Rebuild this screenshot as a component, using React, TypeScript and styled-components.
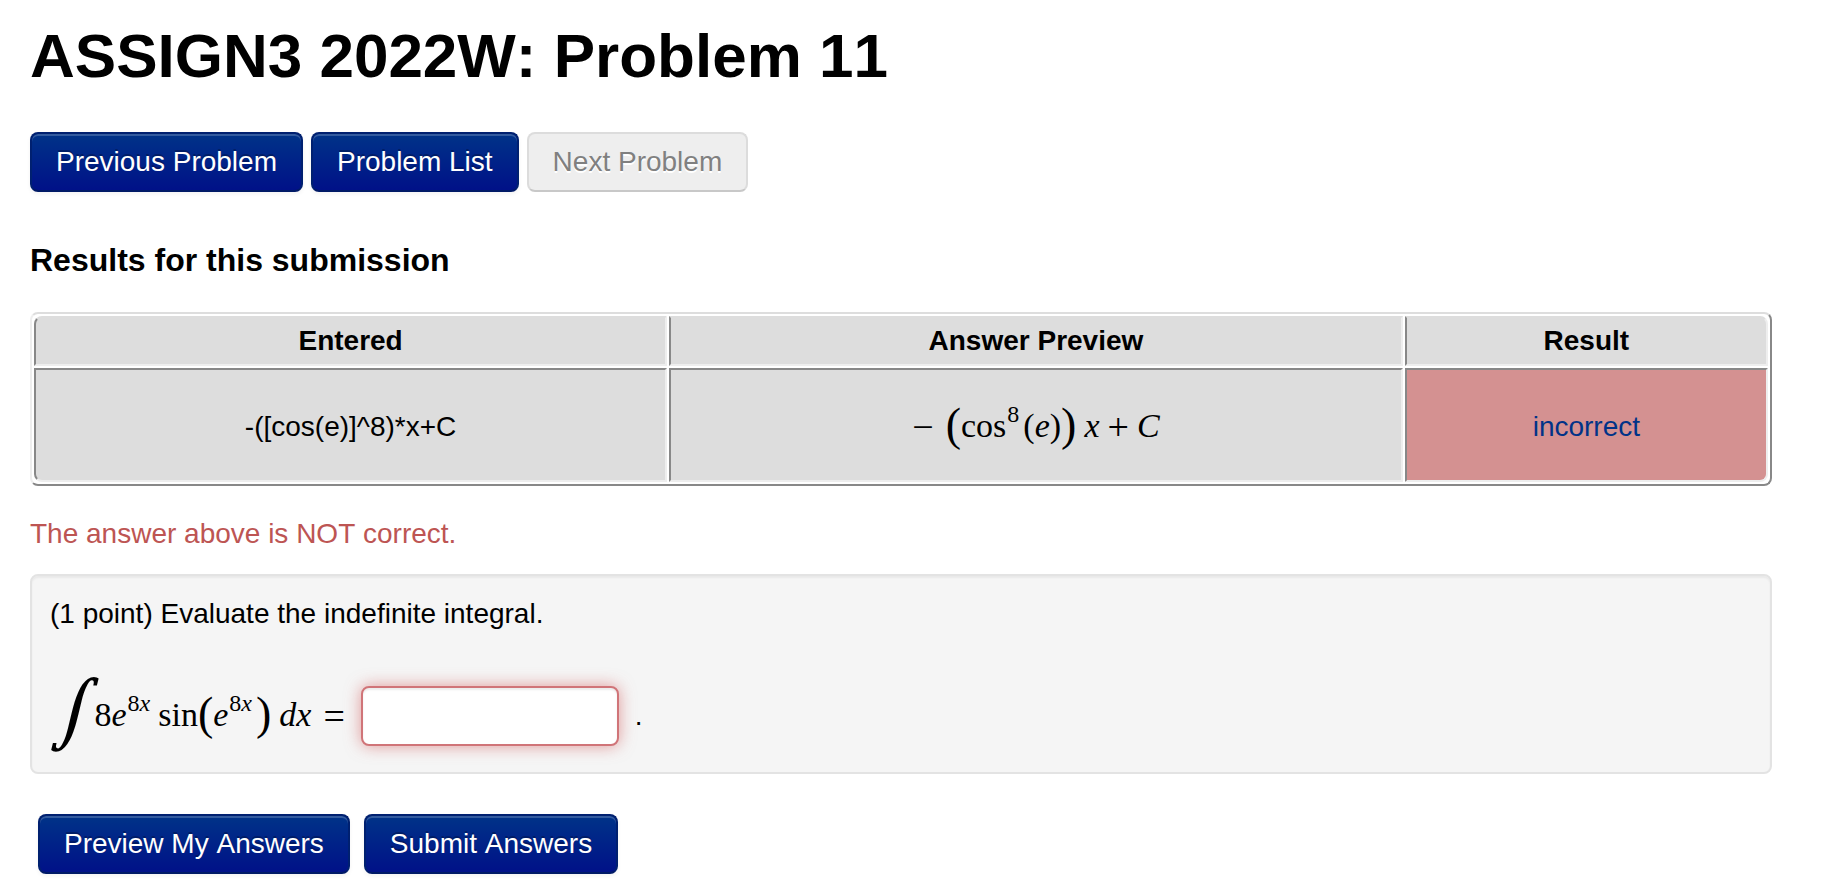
import React from "react";
import styled, { createGlobalStyle, css } from "styled-components";

const GlobalStyle = createGlobalStyle`
  *, *::before, *::after { box-sizing: border-box; }
  body {
    margin: 0;
    background: #fff;
    color: #000;
    font-family: "Liberation Sans", Arial, Helvetica, sans-serif;
    font-size: 28px;
    font-kerning: none;
    line-height: 40px;
  }
`;

const Page = styled.main`
  padding: 16px 60px 14px 30px;
`;

const Title = styled.h1`
  margin: 0 0 36px;
  font-size: 62px;
  line-height: 80px;
  font-weight: 700;
`;

const ButtonRow = styled.div<{ $gap: number; $indent?: number }>`
  display: flex;
  flex-wrap: wrap;
  gap: ${(p) => p.$gap}px;
  padding-left: ${(p) => p.$indent ?? 0}px;
`;

const Button = styled.button`
  padding: 8px 24px;
  border: 2px solid #002070;
  border-bottom-color: #001a66;
  border-radius: 8px;
  background: linear-gradient(to bottom, #003388, #001188);
  box-shadow: inset 0 2px 0 rgba(255, 255, 255, 0.2), 0 2px 4px rgba(0, 0, 0, 0.05);
  color: #fff;
  font: inherit;
  text-shadow: 0 -2px 0 rgba(0, 0, 0, 0.25);
  cursor: pointer;

  &:disabled {
    border-color: #dcdcdc;
    border-bottom-color: #c8c8c8;
    background: #eee;
    box-shadow: none;
    color: #808080;
    text-shadow: 0 2px 0 #fff;
    cursor: default;
  }
`;

const SectionTitle = styled.h2`
  margin: 48px 0 32px;
  font-size: 32px;
  line-height: 40px;
  font-weight: 700;
`;

const ResultsTable = styled.table`
  width: 100%;
  table-layout: fixed;
  border: 2px solid;
  border-color: #ddd #888 #888 #eee;
  border-radius: 8px;
  border-collapse: separate;
  border-spacing: 2px;
  text-align: center;
`;

const Column = styled.col<{ $share: number }>`
  width: ${(p) => p.$share}%;
`;

const cell = css`
  border: 2px solid;
  border-color: #888 #eee #eee #888;
  background: #ddd;
`;

const HeadCell = styled.th`
  ${cell}
  padding: 3px 8px;
  border-top-color: #ddd;
  font-weight: 700;

  &:first-child { border-top-left-radius: 8px; }
  &:last-child { border-top-right-radius: 8px; }
`;

const DataCell = styled.td<{ $wrong?: boolean }>`
  ${cell}
  height: 114px;
  padding: 6px 8px 3px;
  ${(p) => p.$wrong && css`background: #d49191;`}

  &:first-child { border-bottom-left-radius: 8px; }
  &:last-child { border-bottom-right-radius: 8px; }
`;

const ResultLink = styled.a`
  color: #003388;
  text-decoration: none;
`;

const Alert = styled.p`
  margin: 28px 0 20px;
  color: #bd5553;
`;

const ProblemBox = styled.section`
  margin-bottom: 40px;
  padding: 18px 18px 26px;
  border: 2px solid #e3e3e3;
  border-radius: 8px;
  background: #f5f5f5;
  box-shadow: inset 0 2px 2px rgba(0, 0, 0, 0.05);
`;

const Prompt = styled.p`
  margin: 0;
`;

const AnswerLine = styled.div`
  display: flex;
  align-items: center;
  margin-top: 52px;
`;

const AnswerInput = styled.input`
  width: 258px;
  height: 60px;
  margin: 0 16px;
  padding: 8px 12px;
  border: 2px solid #d07478;
  border-radius: 8px;
  background: #fff;
  box-shadow: inset 0 2px 2px rgba(0, 0, 0, 0.08), 0 0 16px rgba(210, 90, 90, 0.6);
  font: inherit;
  outline: none;
`;

const Formula = styled.span`
  display: inline-block;
  font-family: "Liberation Serif", "Times New Roman", serif;
  font-size: 34px;
  line-height: 40px;
  white-space: nowrap;
`;

const Term = styled.span<{ $before?: number }>`
  margin-left: ${(p) => p.$before ?? 0}px;
`;

const Variable = styled(Term)`
  font-style: italic;
`;

const Operator = styled(Term)`
  font-size: 38px;
  line-height: 0;
  vertical-align: -3px;
`;

const Exponent = styled.span`
  margin-left: 1px;
  font-size: 24px;
  line-height: 0;
  vertical-align: 15px;
`;

const TallParen = styled(Term)`
  font-size: 46px;
  line-height: 0;
  vertical-align: -3px;
`;

const IntegralSign = styled.span`
  font-family: "DejaVu Math TeX Gyre", "Liberation Serif", serif;
  font-size: 68px;
  font-style: italic;
  line-height: 0;
  vertical-align: -7px;
`;

function AnswerPreview() {
  return (
    <Formula>
      <Operator>−</Operator>
      <TallParen $before={12}>(</TallParen>
      <Term>cos</Term>
      <Exponent>8</Exponent>
      <Term $before={4}>(</Term>
      <Variable>e</Variable>
      <Term>)</Term>
      <TallParen>)</TallParen>
      <Variable $before={8}>x</Variable>
      <Operator $before={8}>+</Operator>
      <Variable $before={8}>C</Variable>
    </Formula>
  );
}

function Integral() {
  return (
    <Formula>
      <IntegralSign>∫</IntegralSign>
      <Term $before={4}>8</Term>
      <Variable>e</Variable>
      <Exponent>8<Variable>x</Variable></Exponent>
      <Term $before={8}>sin</Term>
      <TallParen>(</TallParen>
      <Variable>e</Variable>
      <Exponent>8<Variable>x</Variable></Exponent>
      <TallParen $before={4}>)</TallParen>
      <Variable $before={8}>dx</Variable>
      <Operator $before={12}>=</Operator>
    </Formula>
  );
}

export default function App() {
  return (
    <>
      <GlobalStyle />
      <Page>
        <Title>ASSIGN3 2022W: Problem 11</Title>
        <ButtonRow $gap={8}>
          <Button type="button">Previous Problem</Button>
          <Button type="button">Problem List</Button>
          <Button type="button" disabled>Next Problem</Button>
        </ButtonRow>

        <SectionTitle>Results for this submission</SectionTitle>
        <ResultsTable>
          <colgroup>
            <Column $share={36.6} />
            <Column $share={42.4} />
            <Column $share={21} />
          </colgroup>
          <thead>
            <tr>
              <HeadCell scope="col">Entered</HeadCell>
              <HeadCell scope="col">Answer Preview</HeadCell>
              <HeadCell scope="col">Result</HeadCell>
            </tr>
          </thead>
          <tbody>
            <tr>
              <DataCell>-([cos(e)]^8)*x+C</DataCell>
              <DataCell><AnswerPreview /></DataCell>
              <DataCell $wrong><ResultLink href="#answer">incorrect</ResultLink></DataCell>
            </tr>
          </tbody>
        </ResultsTable>
        <Alert>The answer above is NOT correct.</Alert>

        <form onSubmit={(event) => event.preventDefault()}>
          <ProblemBox>
            <Prompt>(1 point) Evaluate the indefinite integral.</Prompt>
            <AnswerLine>
              <label htmlFor="answer"><Integral /></label>
              <AnswerInput id="answer" type="text" autoComplete="off" />
              <span>.</span>
            </AnswerLine>
          </ProblemBox>
          <ButtonRow $gap={14} $indent={8}>
            <Button type="submit">Preview My Answers</Button>
            <Button type="submit">Submit Answers</Button>
          </ButtonRow>
        </form>
      </Page>
    </>
  );
}
